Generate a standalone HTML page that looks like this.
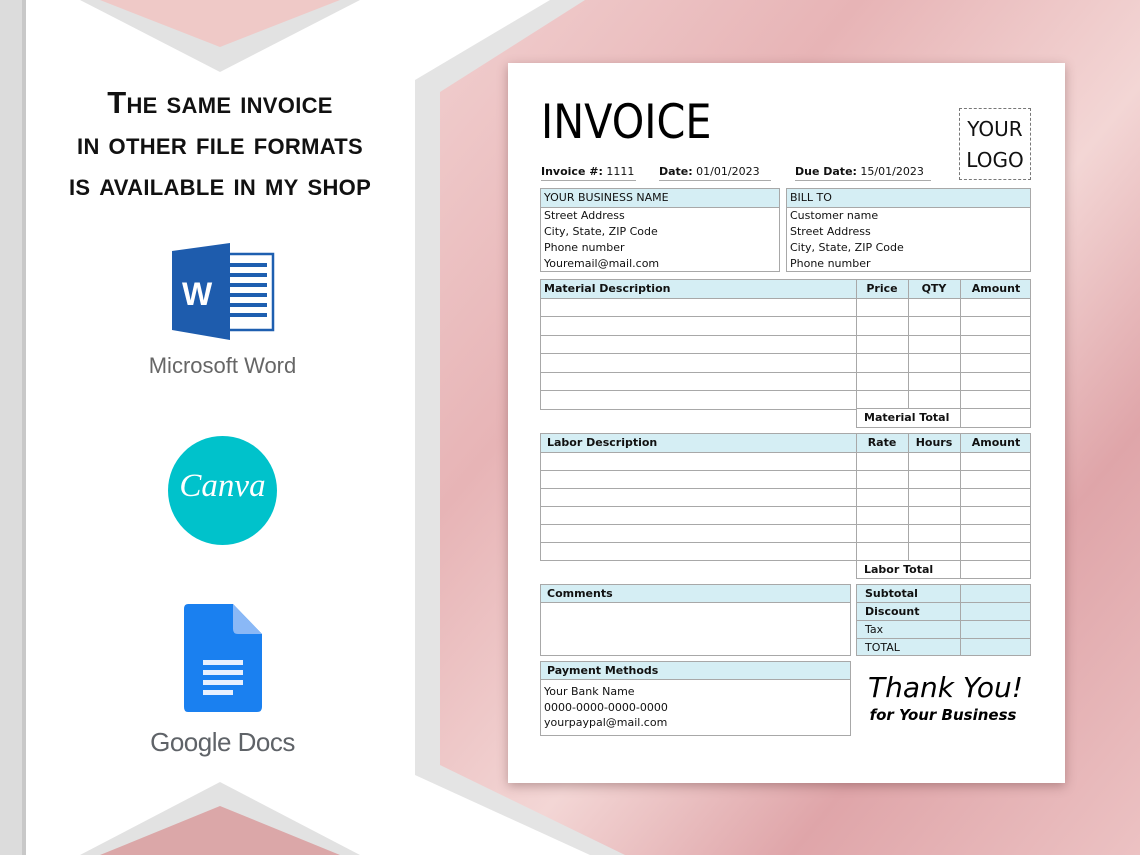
<!DOCTYPE html>
<html><head><meta charset="utf-8">
<style>
*{margin:0;padding:0;box-sizing:border-box}
body{width:1140px;height:855px;overflow:hidden;position:relative;background:#fff;font-family:"DejaVu Sans","Liberation Sans",sans-serif}
.abs{position:absolute}
.inv{font-family:"DejaVu Sans",sans-serif;color:#111;font-size:11px;line-height:16px;white-space:nowrap}
.box{position:absolute;border:1.3px solid #a8a8a8;background:#fff}
.hd{background:#d5eef4;border-bottom:1.3px solid #a8a8a8;height:19px;line-height:18px;padding-left:3px}
.b{font-weight:bold}
.hl{position:absolute;left:0;right:0;height:0;border-top:1.3px solid #a8a8a8}
.vl{position:absolute;top:0;bottom:0;width:0;border-left:1.3px solid #a8a8a8}
</style></head><body>
<svg class="abs" style="left:0;top:0" width="1140" height="855">
<defs>
<linearGradient id="pk" x1="0" y1="0" x2="1" y2="1">
<stop offset="0" stop-color="#f1cfcf"/><stop offset="0.3" stop-color="#e7b4b6"/><stop offset="0.55" stop-color="#f3d6d5"/><stop offset="0.75" stop-color="#dfa5a9"/><stop offset="1" stop-color="#ecc2c3"/>
</linearGradient>
</defs>
<rect x="0" y="0" width="26" height="855" fill="#dcdcdc"/>
<rect x="22" y="0" width="4" height="855" fill="#c8c8c8"/>
<polygon points="80,0 360,0 220,72" fill="#e2e2e2"/>
<polygon points="100,0 340,0 220,47" fill="#efc9c7"/>
<polygon points="80,855 360,855 220,782" fill="#e2e2e2"/>
<polygon points="100,855 340,855 220,806" fill="#dba7a8"/>
<polygon points="550,0 1140,0 1140,855 590,855 415,775 415,80" fill="#e4e4e4"/>
<polygon points="585,0 1140,0 1140,855 625,855 440,765 440,92" fill="url(#pk)"/>
</svg>
<!-- left text -->
<div class="abs" style="left:20px;top:82px;width:400px;text-align:center;font-family:'Liberation Sans',sans-serif;font-variant:small-caps;font-weight:bold;font-size:31px;line-height:41px;color:#111;letter-spacing:0.3px;white-space:nowrap">The same invoice<br>in other file formats<br>is available in my shop</div>
<!-- word icon -->
<svg class="abs" style="left:170px;top:242px" width="106" height="100">
<rect x="56" y="12" width="47" height="76" fill="#fff" stroke="#1e5fb0" stroke-width="2.5"/>
<g fill="#1e5fb0"><rect x="60" y="21" width="37" height="4"/><rect x="60" y="31" width="37" height="4"/><rect x="60" y="41" width="37" height="4"/><rect x="60" y="51" width="37" height="4"/><rect x="60" y="61" width="37" height="4"/><rect x="60" y="71" width="37" height="4"/></g>
<polygon points="2,9 60,1 60,98 2,88" fill="#1e5cad"/>
<text x="12" y="63" font-family="Liberation Sans" font-weight="bold" font-size="32" fill="#fff">W</text>
</svg>
<div class="abs" style="left:120px;top:353px;width:205px;text-align:center;font-family:'Liberation Sans',sans-serif;font-size:22px;color:#666">Microsoft Word</div>
<!-- canva -->
<div class="abs" style="left:168px;top:436px;width:109px;height:109px;border-radius:50%;background:#00c2cb"></div>
<div class="abs" style="left:168px;top:468px;width:109px;text-align:center;font-family:'Liberation Serif',serif;font-style:italic;font-size:33px;color:#fff">Canva</div>
<!-- gdocs -->
<svg class="abs" style="left:183px;top:603px" width="81" height="111">
<path d="M5 1 H50 L79 31 V104 Q79 109 74 109 H5 Q1 109 1 104 V6 Q1 1 5 1Z" fill="#1a80f0"/>
<path d="M50 1 L79 31 H55 Q50 31 50 26Z" fill="#8ab8f6"/>
<g fill="#e8f0fe"><rect x="20" y="57" width="40" height="5"/><rect x="20" y="67" width="40" height="5"/><rect x="20" y="77" width="40" height="5"/><rect x="20" y="87" width="30" height="5"/></g>
</svg>
<div class="abs" style="left:120px;top:727px;width:205px;text-align:center;font-family:'Liberation Sans',sans-serif;font-size:26px;color:#5f6368;letter-spacing:-0.5px">Google Docs</div>

<!-- paper -->
<div class="abs" style="left:508px;top:63px;width:557px;height:720px;background:#fff;box-shadow:0 3px 10px rgba(80,40,40,0.35)"></div>
<div class="inv">
<div class="abs" style="left:541px;top:94px;font-size:47px;line-height:58px;color:#000;transform:scaleX(0.88);transform-origin:left top">INVOICE</div>
<div class="abs" style="left:959px;top:108px;width:72px;height:72px;border:1.3px dashed #777;text-align:center;font-size:20px;line-height:31px;padding-top:5px;color:#111">YOUR<br>LOGO</div>
<div class="abs" style="left:541px;top:164px;width:95px;border-bottom:1px solid #aaa"><span class="b">Invoice #:</span> 1111</div>
<div class="abs" style="left:659px;top:164px;width:112px;border-bottom:1px solid #aaa"><span class="b">Date:</span> 01/01/2023</div>
<div class="abs" style="left:795px;top:164px;width:136px;border-bottom:1px solid #aaa"><span class="b">Due Date:</span> 15/01/2023</div>

<div class="box" style="left:540px;top:188px;width:240px;height:84px"><div class="hd">YOUR BUSINESS NAME</div><div style="padding-left:3px;line-height:16px">Street Address<br>City, State, ZIP Code<br>Phone number<br>Youremail@mail.com</div></div>
<div class="box" style="left:786px;top:188px;width:245px;height:84px"><div class="hd">BILL TO</div><div style="padding-left:3px;line-height:16px">Customer name<br>Street Address<br>City, State, ZIP Code<br>Phone number</div></div>

<!-- material -->
<div class="box" style="left:540px;top:279px;width:491px;height:131px">
<div class="hd b">Material Description</div>
<div class="hl" style="top:36px"></div><div class="hl" style="top:55px"></div><div class="hl" style="top:73px"></div><div class="hl" style="top:92px"></div><div class="hl" style="top:110px"></div>
<div class="vl" style="left:315px"></div><div class="vl" style="left:367px"></div><div class="vl" style="left:419px"></div>
<div class="abs b" style="left:315px;top:0;width:52px;text-align:center;line-height:18px">Price</div>
<div class="abs b" style="left:367px;top:0;width:52px;text-align:center;line-height:18px">QTY</div>
<div class="abs b" style="left:419px;top:0;width:72px;text-align:center;line-height:18px">Amount</div>
</div>
<div class="box" style="left:856px;top:408px;width:175px;height:20px"><div class="vl" style="left:103px"></div><div class="b" style="padding-left:7px;line-height:18px">Material Total</div></div>

<!-- labor -->
<div class="box" style="left:540px;top:433px;width:491px;height:128px">
<div class="hd b" style="padding-left:6px">Labor Description</div>
<div class="hl" style="top:36px"></div><div class="hl" style="top:54px"></div><div class="hl" style="top:72px"></div><div class="hl" style="top:90px"></div><div class="hl" style="top:108px"></div>
<div class="vl" style="left:315px"></div><div class="vl" style="left:367px"></div><div class="vl" style="left:419px"></div>
<div class="abs b" style="left:315px;top:0;width:52px;text-align:center;line-height:18px">Rate</div>
<div class="abs b" style="left:367px;top:0;width:52px;text-align:center;line-height:18px">Hours</div>
<div class="abs b" style="left:419px;top:0;width:72px;text-align:center;line-height:18px">Amount</div>
</div>
<div class="box" style="left:856px;top:560px;width:175px;height:19px"><div class="vl" style="left:103px"></div><div class="b" style="padding-left:7px;line-height:17px">Labor Total</div></div>

<div class="box" style="left:540px;top:584px;width:311px;height:72px"><div class="hd b" style="height:18px;line-height:17px;padding-left:6px">Comments</div></div>
<div class="box" style="left:856px;top:584px;width:175px;height:72px;background:#d5eef4">
<div class="hl" style="top:17px"></div><div class="hl" style="top:35px"></div><div class="hl" style="top:53px"></div>
<div class="vl" style="left:103px"></div>
<div class="b" style="padding-left:8px;line-height:18px">Subtotal<br>Discount<br><span style="font-weight:normal">Tax<br>TOTAL</span></div>
</div>

<div class="box" style="left:540px;top:661px;width:311px;height:75px"><div class="hd b" style="height:18px;line-height:17px;padding-left:6px">Payment Methods</div><div style="padding:4px 0 0 3px;line-height:15.5px">Your Bank Name<br>0000-0000-0000-0000<br>yourpaypal@mail.com</div></div>

<div class="abs" style="left:858px;top:670px;width:175px;text-align:center;font-style:italic;font-size:28px;line-height:36px;color:#000">Thank You!</div>
<div class="abs" style="left:858px;top:705px;width:170px;text-align:center;font-style:italic;font-weight:bold;font-size:15px;line-height:20px;color:#000">for Your Business</div>
</div>
</body></html>
